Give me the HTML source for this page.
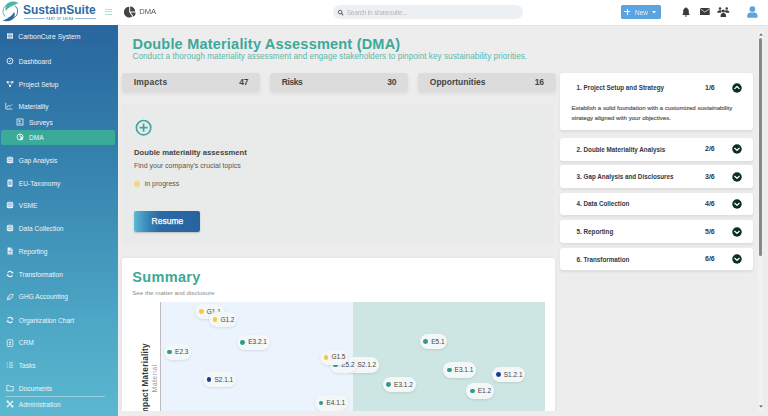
<!DOCTYPE html>
<html><head><meta charset="utf-8"><style>
html,body{margin:0;padding:0;width:768px;height:416px;overflow:hidden;background:#ededed;font-family:"Liberation Sans", sans-serif;}
.t{position:absolute;white-space:nowrap;line-height:1;}
.pill{position:absolute;height:15.2px;border-radius:7.6px;background:#f4f7f7;box-shadow:0 1px 2.5px rgba(0,0,0,0.10);display:flex;align-items:center;padding:0 2.8px 0 3.6px;white-space:nowrap;}
.dot{display:block;flex:none;width:4.8px;height:4.8px;border-radius:50%;margin-right:3px;}
.pl{font-size:6.5px;color:#444;line-height:1;position:relative;top:0.5px;}
</style></head><body>
<div style="position:absolute;left:0px;top:0px;width:768px;height:24.5px;background:#fff;z-index:5"></div>
<div style="position:absolute;left:117.5px;top:24.5px;width:650.5px;height:1.3px;background:#e3e5e5;z-index:5"></div>
<svg style="position:absolute;left:0;top:0;z-index:6" width="22" height="24" viewBox="0 0 22 24">
<path d="M10.3 3.9 A7.4 7.4 0 0 0 5.07 16.53" stroke="#4fb5a7" stroke-width="0.9" fill="none"/>
<path d="M10.3 18.7 A7.4 7.4 0 0 0 15.06 5.63" stroke="#2b6aa6" stroke-width="0.9" fill="none"/>
<path d="M18.8 3.2 C14.5 0.4 7.8 1.2 6 5.6 C5.2 7.6 5.3 9.5 5.9 11.2 C7.6 7.8 10.8 7.2 13.2 5.6 C15 4.6 16.8 3.5 18.8 3.2 Z" fill="#4fb5a7"/>
<path d="M2.6 20.6 C7 22 12.6 21.2 14.2 17 C15 15 14.8 13.3 14 12 C12.6 15.4 9.6 17 7.2 18.4 C5.6 19.3 4 19.9 2.6 20.6 Z" fill="#2b6aa6"/>
</svg>
<div class="t" style="left:23.4px;top:3.00px;font-size:13.7px;font-weight:bold;color:#2d6aa6;z-index:6;transform:scaleX(0.875);transform-origin:0 0">SustainSuite</div>
<div style="position:absolute;left:23.5px;top:18.2px;width:21.5px;height:0.7px;background:#9db8d4;z-index:6"></div>
<div style="position:absolute;left:74.7px;top:18.2px;width:21.1px;height:0.7px;background:#9db8d4;z-index:6"></div>
<div class="t" style="left:-40.2px;width:200px;text-align:center;top:19.00px;font-size:2.7px;color:#3fa99b;font-weight:bold;z-index:6;letter-spacing:0.5px;will-change:transform">PART OF SHIRA</div>
<div style="position:absolute;left:105.4px;top:8.8px;width:6.8px;height:0.75px;background:#b3ddd6;z-index:6"></div>
<div style="position:absolute;left:105.4px;top:11.3px;width:6.8px;height:0.75px;background:#b3ddd6;z-index:6"></div>
<div style="position:absolute;left:105.4px;top:14.0px;width:6.8px;height:0.75px;background:#b3ddd6;z-index:6"></div>
<svg style="position:absolute;left:120px;top:2.5px;z-index:6" width="20" height="18" viewBox="0 0 20 18">
<path d="M9.2 9.1 L9.2 3.7 A5.4 5.4 0 1 0 12.3 13.52 Z" fill="#454545"/>
<path d="M10.2 8.6 L10.2 3.6 A5.0 5.0 0 0 1 15.2 8.6 Z" fill="#454545"/>
<path d="M10.7 9.6 L15.7 9.6 A5.0 5.0 0 0 1 13.64 13.65 Z" fill="#454545"/>
</svg>
<div class="t" style="left:139.3px;top:8.00px;font-size:7.6px;color:#555;z-index:6">DMA</div>
<div style="position:absolute;left:332.8px;top:4.6px;width:190.2px;height:14.3px;background:#edf0f3;border-radius:7.2px;z-index:6"></div>
<svg style="position:absolute;left:336px;top:8px;z-index:7" width="8" height="8" viewBox="0 0 8 8">
<circle cx="4.1" cy="4.1" r="1.85" stroke="#5a5a5a" stroke-width="0.95" fill="none"/><path d="M5.4 5.4 L6.9 6.9" stroke="#5a5a5a" stroke-width="1.1" stroke-linecap="round"/></svg>
<div class="t" style="left:346.7px;top:10.00px;font-size:6.6px;color:#b4b4b4;z-index:7;letter-spacing:-0.22px">Search in sharesuite...</div>
<div style="position:absolute;left:620.7px;top:4.7px;width:40.3px;height:14.3px;background:#5ca4e0;border-radius:1.6px;z-index:6"></div>
<div style="position:absolute;left:624.3px;top:11.4px;width:5.8px;height:0.8px;background:#fff;z-index:7"></div>
<div style="position:absolute;left:626.8px;top:8.9px;width:0.8px;height:5.8px;background:#fff;z-index:7"></div>
<div class="t" style="left:635.0px;top:10.00px;font-size:6.5px;color:rgba(255,255,255,0.85);z-index:7">New</div>
<svg style="position:absolute;left:652px;top:10.5px;z-index:7" width="4" height="3" viewBox="0 0 4 3"><path d="M0 0 L4 0 L2 2.4 Z" fill="#fff"/></svg>
<svg style="position:absolute;left:681.5px;top:7px;z-index:7" width="8" height="10" viewBox="0 0 8 10">
<path d="M4 0.3 C4.5 0.3 4.7 0.7 4.7 1.1 C6.2 1.5 6.8 2.8 6.8 4.3 L6.8 6.3 L7.8 7.9 L0.2 7.9 L1.2 6.3 L1.2 4.3 C1.2 2.8 1.8 1.5 3.3 1.1 C3.3 0.7 3.5 0.3 4 0.3 Z" fill="#3a3a3a"/>
<path d="M2.8 8.5 L5.2 8.5 C5.2 9.2 4.7 9.7 4 9.7 C3.3 9.7 2.8 9.2 2.8 8.5 Z" fill="#3a3a3a"/></svg>
<svg style="position:absolute;left:699.7px;top:8.1px;z-index:7" width="10" height="7.4" viewBox="0 0 10 7.4">
<rect x="0" y="0" width="9.7" height="7.3" rx="0.8" fill="#3a3a3a"/>
<path d="M0.4 0.9 L4.85 4.1 L9.3 0.9" stroke="#fff" stroke-width="0.7" fill="none"/></svg>
<svg style="position:absolute;left:717.3px;top:6.6px;z-index:7" width="13" height="10.5" viewBox="0 0 13 10.5">
<circle cx="3.0" cy="1.5" r="1.25" fill="#3a3a3a"/><circle cx="9.7" cy="1.5" r="1.25" fill="#3a3a3a"/>
<path d="M0.2 5.7 C0.2 4.3 1.2 3.3 2.6 3.3 L3.4 3.3 C4.2 3.3 4.7 3.6 5 4 C4.3 4.5 4 5 3.9 5.7 Z" fill="#3a3a3a"/>
<path d="M12.4 5.7 C12.4 4.3 11.4 3.3 10 3.3 L9.2 3.3 C8.4 3.3 7.9 3.6 7.6 4 C8.3 4.5 8.6 5 8.7 5.7 Z" fill="#3a3a3a"/>
<circle cx="6.3" cy="3.9" r="1.5" fill="#3a3a3a"/>
<path d="M3.5 9.4 C3.5 7.4 4.4 6.1 5.8 6.1 L6.8 6.1 C8.2 6.1 9.1 7.4 9.1 9.4 C9.1 9.8 8.9 10.1 8.5 10.1 L4.1 10.1 C3.7 10.1 3.5 9.8 3.5 9.4 Z" fill="#3a3a3a"/></svg>
<svg style="position:absolute;left:746.8px;top:5.8px;z-index:7" width="11" height="12" viewBox="0 0 11 12">
<circle cx="5.4" cy="3.1" r="2.9" fill="#5ca4e0"/>
<path d="M0.1 10.6 C0.1 7.8 1.6 6.4 3.4 6.4 L7.4 6.4 C9.2 6.4 10.7 7.8 10.7 10.6 C10.7 11.3 10.3 11.7 9.6 11.7 L1.2 11.7 C0.5 11.7 0.1 11.3 0.1 10.6 Z" fill="#5ca4e0"/></svg>
<div style="position:absolute;left:0px;top:24.5px;width:117.5px;height:391.5px;background:linear-gradient(180deg,#28669e 0%,#3582ae 35%,#4ca6c5 75%,#5bb8d0 100%);z-index:4"></div>
<div style="position:absolute;left:1.2px;top:130px;width:113.8px;height:14.7px;background:#3aab99;border-radius:2px;z-index:5"></div>
<div class="t" style="left:18.2px;top:34.00px;font-size:6.9px;color:#eef4fa;z-index:6">CarbonCure System</div>
<svg style="position:absolute;left:5.5px;top:32.1px;z-index:6" width="8" height="8" viewBox="0 0 8 8"><rect x="1" y="1.3" width="6" height="5.4" rx="0.6" fill="#eef4fa"/><path d="M3 1.3 V6.7 M5 1.3 V6.7 M1 4 H7" stroke="#2a68a2" stroke-width="0.55"/></svg>
<div class="t" style="left:18.8px;top:59.00px;font-size:6.6px;color:#eef4fa;z-index:6">Dashboard</div>
<svg style="position:absolute;left:5.5px;top:56.9px;z-index:6" width="8" height="8" viewBox="0 0 8 8"><circle cx="4" cy="4" r="2.9" stroke="#eef4fa" stroke-width="0.9" fill="none"/><path d="M3.2 5 L5.2 2.7" stroke="#eef4fa" stroke-width="0.9"/></svg>
<div class="t" style="left:18.8px;top:82.00px;font-size:6.6px;color:#eef4fa;z-index:6">Project Setup</div>
<svg style="position:absolute;left:5.5px;top:79.80000000000001px;z-index:6" width="8" height="8" viewBox="0 0 8 8"><rect x="0.7" y="1.2" width="2" height="1.8" fill="#eef4fa"/><rect x="5.3" y="1.2" width="2" height="1.8" fill="#eef4fa"/><rect x="3" y="5" width="2" height="1.8" fill="#eef4fa"/><path d="M2.7 2.1 H5.3 M1.7 3 L3.5 5 M6.3 3 L4.5 5" stroke="#eef4fa" stroke-width="0.6"/></svg>
<div class="t" style="left:18.6px;top:104.00px;font-size:6.6px;color:#eef4fa;z-index:6">Materiality</div>
<svg style="position:absolute;left:5.300000000000001px;top:102.30000000000001px;z-index:6" width="8" height="8" viewBox="0 0 8 8"><path d="M0.8 0.8 V7 H7.4" stroke="#eef4fa" stroke-width="0.8" fill="none"/><path d="M1.8 5.4 L3.4 3.4 L4.8 4.6 L7 2.4" stroke="#eef4fa" stroke-width="0.8" fill="none"/></svg>
<div class="t" style="left:28.9px;top:120.00px;font-size:6.6px;color:#eef4fa;z-index:6">Surveys</div>
<svg style="position:absolute;left:15.899999999999999px;top:118.0px;z-index:6" width="8" height="8" viewBox="0 0 8 8"><rect x="1" y="1" width="6" height="6" stroke="#eef4fa" stroke-width="0.8" fill="none"/><rect x="2.5" y="2.4" width="2" height="1.5" fill="#eef4fa"/><path d="M2.4 5.3 H5.6" stroke="#eef4fa" stroke-width="0.7"/></svg>
<div class="t" style="left:28.9px;top:135.00px;font-size:6.6px;color:#eef4fa;z-index:6">DMA</div>
<svg style="position:absolute;left:15.899999999999999px;top:133.3px;z-index:6" width="8" height="8" viewBox="0 0 8 8"><circle cx="4" cy="4" r="3" stroke="#eef4fa" stroke-width="0.9" fill="none"/><path d="M4 1 V4 H7" stroke="#eef4fa" stroke-width="0.8" fill="none"/><circle cx="5.6" cy="5.6" r="1.6" fill="#eef4fa"/></svg>
<div class="t" style="left:18.8px;top:158.00px;font-size:6.6px;color:#eef4fa;z-index:6">Gap Analysis</div>
<svg style="position:absolute;left:5.5px;top:156.1px;z-index:6" width="8" height="8" viewBox="0 0 8 8"><path d="M0.8 1.9 C0.8 0.4 7.2 0.4 7.2 1.9 V6.2 C7.2 7.7 0.8 7.7 0.8 6.2 Z" fill="#eef4fa"/><path d="M1.3 3.0 C2.2 3.9 5.8 3.9 6.7 3.0 M1.3 4.7 C2.2 5.6 5.8 5.6 6.7 4.7" stroke="#3a88b8" stroke-width="0.55" fill="none"/><ellipse cx="4" cy="1.9" rx="2.4" ry="0.7" fill="#3a88b8" opacity="0.5"/></svg>
<div class="t" style="left:18.8px;top:181.00px;font-size:6.6px;color:#eef4fa;z-index:6">EU-Taxonomy</div>
<svg style="position:absolute;left:5.6px;top:178.8px;z-index:6" width="8" height="8" viewBox="0 0 8 8"><rect x="1.5" y="0.4" width="5" height="7.3" rx="1" fill="#eef4fa"/><path d="M2.4 2.3 H5.6 M2.4 5.6 H5.6" stroke="#3a88b8" stroke-width="0.6"/><rect x="2.3" y="3.1" width="3.4" height="1.8" fill="#3a88b8" opacity="0.6"/></svg>
<div class="t" style="left:18.8px;top:203.00px;font-size:6.6px;color:#eef4fa;z-index:6">VSME</div>
<svg style="position:absolute;left:5.5px;top:201.3px;z-index:6" width="8" height="8" viewBox="0 0 8 8"><path d="M0.8 1.9 C0.8 0.4 7.2 0.4 7.2 1.9 V6.2 C7.2 7.7 0.8 7.7 0.8 6.2 Z" fill="#eef4fa"/><path d="M1.3 3.0 C2.2 3.9 5.8 3.9 6.7 3.0 M1.3 4.7 C2.2 5.6 5.8 5.6 6.7 4.7" stroke="#3a88b8" stroke-width="0.55" fill="none"/><ellipse cx="4" cy="1.9" rx="2.4" ry="0.7" fill="#3a88b8" opacity="0.5"/></svg>
<div class="t" style="left:18.8px;top:226.00px;font-size:6.6px;color:#eef4fa;z-index:6">Data Collection</div>
<svg style="position:absolute;left:5.5px;top:224.4px;z-index:6" width="8" height="8" viewBox="0 0 8 8"><path d="M0.8 1.9 C0.8 0.4 7.2 0.4 7.2 1.9 V6.2 C7.2 7.7 0.8 7.7 0.8 6.2 Z" fill="#eef4fa"/><path d="M1.3 3.0 C2.2 3.9 5.8 3.9 6.7 3.0 M1.3 4.7 C2.2 5.6 5.8 5.6 6.7 4.7" stroke="#3a88b8" stroke-width="0.55" fill="none"/><ellipse cx="4" cy="1.9" rx="2.4" ry="0.7" fill="#3a88b8" opacity="0.5"/></svg>
<div class="t" style="left:18.8px;top:249.00px;font-size:6.6px;color:#eef4fa;z-index:6">Reporting</div>
<svg style="position:absolute;left:5.5px;top:247.4px;z-index:6" width="8" height="8" viewBox="0 0 8 8"><path d="M1.6 0.5 H4.9 L6.6 2.2 V7.5 H1.6 Z" fill="#eef4fa"/><path d="M4.8 0.5 V2.3 H6.6" stroke="#4a9cc4" stroke-width="0.5" fill="none"/><rect x="2.6" y="3.6" width="2.9" height="1.6" fill="#4a9cc4" opacity="0.75"/><path d="M2.6 6.3 H5.5" stroke="#4a9cc4" stroke-width="0.5"/></svg>
<div class="t" style="left:18.8px;top:272.00px;font-size:6.6px;color:#eef4fa;z-index:6">Transformation</div>
<svg style="position:absolute;left:5.5px;top:270.2px;z-index:6" width="8" height="8" viewBox="0 0 8 8"><path d="M6.6 3.2 A2.8 2.8 0 0 0 1.6 2.6" stroke="#eef4fa" stroke-width="1.15" fill="none"/><path d="M1.4 4.8 A2.8 2.8 0 0 0 6.4 5.4" stroke="#eef4fa" stroke-width="1.15" fill="none"/><path d="M5.2 3.4 H7.2 V1.4 Z M2.8 4.6 H0.8 V6.6 Z" fill="#eef4fa"/></svg>
<div class="t" style="left:18.8px;top:294.00px;font-size:6.6px;color:#eef4fa;z-index:6">GHG Accounting</div>
<svg style="position:absolute;left:5.5px;top:292.59999999999997px;z-index:6" width="8" height="8" viewBox="0 0 8 8"><path d="M1.5 6.5 C1.5 3 3.5 1.2 7 1.2 C7 4.8 5 6.5 1.5 6.5 Z" stroke="#eef4fa" stroke-width="0.8" fill="none"/><path d="M0.8 7.3 L4.8 3.3" stroke="#eef4fa" stroke-width="0.7"/></svg>
<div class="t" style="left:18.8px;top:318.00px;font-size:6.6px;color:#eef4fa;z-index:6">Organization Chart</div>
<svg style="position:absolute;left:5.5px;top:315.7px;z-index:6" width="8" height="8" viewBox="0 0 8 8"><path d="M6.6 3.2 A2.8 2.8 0 0 0 1.6 2.6" stroke="#eef4fa" stroke-width="1.15" fill="none"/><path d="M1.4 4.8 A2.8 2.8 0 0 0 6.4 5.4" stroke="#eef4fa" stroke-width="1.15" fill="none"/><path d="M5.2 3.4 H7.2 V1.4 Z M2.8 4.6 H0.8 V6.6 Z" fill="#eef4fa"/></svg>
<div class="t" style="left:18.8px;top:340.00px;font-size:6.6px;color:#eef4fa;z-index:6">CRM</div>
<svg style="position:absolute;left:5.5px;top:338.5px;z-index:6" width="8" height="8" viewBox="0 0 8 8"><rect x="1.2" y="0.8" width="5.6" height="6.6" rx="0.7" stroke="#eef4fa" stroke-width="0.8" fill="none"/><circle cx="4" cy="3.4" r="1" fill="#eef4fa"/><path d="M2.6 6 C2.6 4.9 5.4 4.9 5.4 6 Z" fill="#eef4fa"/></svg>
<div class="t" style="left:18.8px;top:363.00px;font-size:6.6px;color:#eef4fa;z-index:6">Tasks</div>
<svg style="position:absolute;left:5.5px;top:361.09999999999997px;z-index:6" width="8" height="8" viewBox="0 0 8 8"><path d="M0.8 1.8 H1.8 M0.8 4 H1.8 M0.8 6.2 H1.8 M3 1.8 H7.2 M3 4 H7.2 M3 6.2 H7.2" stroke="#eef4fa" stroke-width="0.8"/></svg>
<div class="t" style="left:18.8px;top:386.00px;font-size:6.6px;color:#eef4fa;z-index:6">Documents</div>
<svg style="position:absolute;left:5.5px;top:384.4px;z-index:6" width="8" height="8" viewBox="0 0 8 8"><path d="M0.8 1.5 H3 L3.8 2.4 H7.2 V6.8 H0.8 Z" stroke="#eef4fa" stroke-width="0.8" fill="none" stroke-linejoin="round"/></svg>
<div class="t" style="left:18.8px;top:402.00px;font-size:6.6px;color:#eef4fa;z-index:6">Administration</div>
<svg style="position:absolute;left:5.5px;top:399.9px;z-index:6" width="8" height="8" viewBox="0 0 8 8"><path d="M1 1 L7 7 M7 1 L1 7" stroke="#eef4fa" stroke-width="1.1"/><circle cx="1.6" cy="1.6" r="1.1" fill="#eef4fa"/><circle cx="6.4" cy="6.4" r="1.1" fill="#eef4fa"/></svg>
<div style="position:absolute;left:5.6px;top:396.1px;width:99.4px;height:0.7px;background:rgba(255,255,255,0.38);z-index:6"></div>
<div class="t" style="left:132.5px;top:37.00px;font-size:14.5px;font-weight:bold;color:#3ba99b;letter-spacing:0.21px">Double Materiality Assessment (DMA)</div>
<div class="t" style="left:132.5px;top:53.00px;font-size:8.2px;color:#5cb8ab;letter-spacing:0.03px">Conduct a thorough materiality assessment and engage stakeholders to pinpoint key sustainability priorities.</div>
<div style="position:absolute;left:122px;top:72.7px;width:138px;height:18.9px;background:#dcdcdc;border-radius:3px;box-shadow:0 2px 4px rgba(0,0,0,0.07)"></div>
<div class="t" style="left:133.8px;top:78.00px;font-size:8.5px;font-weight:bold;color:#444;letter-spacing:0.2px">Impacts</div>
<div class="t" style="right:519.4px;top:78.00px;font-size:8.5px;font-weight:bold;color:#444">47</div>
<div style="position:absolute;left:270px;top:72.7px;width:138px;height:18.9px;background:#dcdcdc;border-radius:3px;box-shadow:0 2px 4px rgba(0,0,0,0.07)"></div>
<div class="t" style="left:281.8px;top:78.00px;font-size:8.5px;font-weight:bold;color:#444;letter-spacing:-0.45px">Risks</div>
<div class="t" style="right:371.4px;top:78.00px;font-size:8.5px;font-weight:bold;color:#444">30</div>
<div style="position:absolute;left:418px;top:72.7px;width:137.5px;height:18.9px;background:#dcdcdc;border-radius:3px;box-shadow:0 2px 4px rgba(0,0,0,0.07)"></div>
<div class="t" style="left:429.8px;top:78.00px;font-size:8.5px;font-weight:bold;color:#444;letter-spacing:0.0px">Opportunities</div>
<div class="t" style="right:223.89999999999998px;top:78.00px;font-size:8.5px;font-weight:bold;color:#444">16</div>
<div style="position:absolute;left:121.8px;top:104.5px;width:431.5px;height:138.8px;background:#e9ebea;border-radius:3px;box-shadow:0 0 3px rgba(0,0,0,0.03)"></div>
<svg style="position:absolute;left:134px;top:117.6px" width="19.2" height="19.2" viewBox="0 0 19.2 19.2"><circle cx="9.6" cy="9.7" r="7.2" stroke="#3aa99b" stroke-width="1.65" fill="none"/><path d="M9.6 5.6 V13.8 M5.5 9.7 H13.7" stroke="#3aa99b" stroke-width="1.7"/></svg>
<div class="t" style="left:134px;top:149.00px;font-size:7.7px;font-weight:bold;color:#444">Double materiality assessment</div>
<div class="t" style="left:134px;top:162.00px;font-size:7.0px;color:#555">Find your company&#39;s crucial topics</div>
<div style="position:absolute;left:133.8px;top:180.7px;width:6px;height:6px;background:#f8d67e;border-radius:50%"></div>
<div class="t" style="left:144.7px;top:180.00px;font-size:7.0px;color:#555">in progress</div>
<div style="position:absolute;left:134.1px;top:211px;width:66.4px;height:20.7px;background:linear-gradient(90deg,#5dbad3 0%,#4a9fc8 10%,#3580b4 24%,#2a6aa5 40%,#2664a0 100%);border-radius:2px;box-shadow:0 1px 2px rgba(0,0,0,0.2)"></div>
<div class="t" style="left:67.4px;width:200px;text-align:center;top:217.00px;font-size:8.5px;color:#fff;-webkit-text-stroke:0.25px #fff">Resume</div>
<div style="position:absolute;left:121.7px;top:258px;width:433.6px;height:160px;background:#fff;border-radius:3px;box-shadow:0 0 4px rgba(0,0,0,0.06)"></div>
<div class="t" style="left:132.2px;top:270.00px;font-size:14.5px;font-weight:bold;color:#3ba99b;letter-spacing:0.35px">Summary</div>
<div class="t" style="left:132.2px;top:290.00px;font-size:6.2px;color:#8a8a8a">See the matter and disclosure</div>
<div style="position:absolute;left:160.5px;top:302px;width:192.5px;height:120px;background:#ebf4fd"></div>
<div style="position:absolute;left:353px;top:302px;width:192.3px;height:120px;background:#cde6e3"></div>
<div style="position:absolute;left:160px;top:302px;width:1px;height:120px;background:#bdbdbd"></div>
<div class="t" style="left:45.75999999999999px;top:375.79999999999995px;width:200px;height:8.2px;line-height:8.2px;text-align:center;font-size:8.2px;transform:rotate(-90deg);font-weight:bold;color:#333;letter-spacing:0.27px">Impact Materiality</div>
<div class="t" style="left:54.099999999999994px;top:374.8px;width:200px;height:7.0px;line-height:7.0px;text-align:center;font-size:7.0px;transform:rotate(-90deg);color:#999;letter-spacing:0.4px">Material</div>
<div class="pill" style="left:195.40px;top:303.80px"><span class="dot" style="background:#f5c842"></span><span class="pl">G1.1</span></div>
<div class="pill" style="left:209.00px;top:311.90px"><span class="dot" style="background:#f5c842"></span><span class="pl">G1.2</span></div>
<div class="pill" style="left:236.80px;top:334.60px"><span class="dot" style="background:#2e9a8a"></span><span class="pl">E3.2.1</span></div>
<div class="pill" style="left:163.70px;top:344.40px"><span class="dot" style="background:#2e9a8a"></span><span class="pl">E2.3</span></div>
<div class="pill" style="left:346.00px;top:357.40px"><span class="dot" style="background:#2e9a8a"></span><span class="pl">S2.1.2</span></div>
<div class="pill" style="left:329.80px;top:357.40px"><span class="dot" style="background:#2e9a8a"></span><span class="pl">E5.2</span></div>
<div class="pill" style="left:320.00px;top:349.60px"><span class="dot" style="background:#f5c842"></span><span class="pl">G1.5</span></div>
<div class="pill" style="left:203.00px;top:372.00px"><span class="dot" style="background:#1b3b8c"></span><span class="pl">S2.1.1</span></div>
<div class="pill" style="left:315.00px;top:395.40px"><span class="dot" style="background:#2e9a8a"></span><span class="pl">E4.1.1</span></div>
<div class="pill" style="left:419.80px;top:334.00px"><span class="dot" style="background:#2e9a8a"></span><span class="pl">E5.1</span></div>
<div class="pill" style="left:443.20px;top:362.40px"><span class="dot" style="background:#2e9a8a"></span><span class="pl">E3.1.1</span></div>
<div class="pill" style="left:492.40px;top:366.90px"><span class="dot" style="background:#1b3b8c"></span><span class="pl">S1.2.1</span></div>
<div class="pill" style="left:382.70px;top:376.90px"><span class="dot" style="background:#2e9a8a"></span><span class="pl">E3.1.2</span></div>
<div class="pill" style="left:466.40px;top:383.40px"><span class="dot" style="background:#2e9a8a"></span><span class="pl">E1.2</span></div>
<div style="position:absolute;left:117.5px;top:411px;width:650.5px;height:5px;background:#ededed;z-index:3"></div>
<div style="position:absolute;left:560.1px;top:72.6px;width:192.6px;height:57.20000000000002px;background:#fff;border-radius:3px;box-shadow:0 1.5px 3px rgba(0,0,0,0.07)"></div>
<div class="t" style="left:576.5px;top:85.00px;font-size:6.3px;font-weight:bold;color:#2e3848">1. Project Setup and Strategy</div>
<div class="t" style="left:705.0px;top:84.00px;font-size:7.0px;font-weight:bold;color:#2e3848">1/6</div>
<svg style="position:absolute;left:731.8px;top:83.0px" width="10" height="10" viewBox="-5 -5 10 10"><circle cx="0" cy="0" r="4.75" fill="#0d2e28"/><path d="M-2.2 0.6 L0 -1.5 L2.2 0.6" stroke="#fff" stroke-width="1.25" fill="none" stroke-linecap="round" stroke-linejoin="round"/></svg>
<div style="position:absolute;left:560.1px;top:138.0px;width:192.6px;height:22.80000000000001px;background:#fff;border-radius:3px;box-shadow:0 1.5px 3px rgba(0,0,0,0.07)"></div>
<div class="t" style="left:576.5px;top:147.00px;font-size:6.3px;font-weight:bold;color:#2e3848">2. Double Materiality Analysis</div>
<div class="t" style="left:705.0px;top:145.00px;font-size:7.0px;font-weight:bold;color:#2e3848">2/6</div>
<svg style="position:absolute;left:731.8px;top:144.4px" width="10" height="10" viewBox="-5 -5 10 10"><circle cx="0" cy="0" r="4.75" fill="#0d2e28"/><path d="M-2.2 -0.7 L0 1.4 L2.2 -0.7" stroke="#fff" stroke-width="1.25" fill="none" stroke-linecap="round" stroke-linejoin="round"/></svg>
<div style="position:absolute;left:560.1px;top:165.2px;width:192.6px;height:22.80000000000001px;background:#fff;border-radius:3px;box-shadow:0 1.5px 3px rgba(0,0,0,0.07)"></div>
<div class="t" style="left:576.5px;top:174.00px;font-size:6.3px;font-weight:bold;color:#2e3848">3. Gap Analysis and Disclosures</div>
<div class="t" style="left:705.0px;top:173.00px;font-size:7.0px;font-weight:bold;color:#2e3848">3/6</div>
<svg style="position:absolute;left:731.8px;top:171.6px" width="10" height="10" viewBox="-5 -5 10 10"><circle cx="0" cy="0" r="4.75" fill="#0d2e28"/><path d="M-2.2 -0.7 L0 1.4 L2.2 -0.7" stroke="#fff" stroke-width="1.25" fill="none" stroke-linecap="round" stroke-linejoin="round"/></svg>
<div style="position:absolute;left:560.1px;top:192.6px;width:192.6px;height:22.80000000000001px;background:#fff;border-radius:3px;box-shadow:0 1.5px 3px rgba(0,0,0,0.07)"></div>
<div class="t" style="left:576.5px;top:201.00px;font-size:6.3px;font-weight:bold;color:#2e3848">4. Data Collection</div>
<div class="t" style="left:705.0px;top:200.00px;font-size:7.0px;font-weight:bold;color:#2e3848">4/6</div>
<svg style="position:absolute;left:731.8px;top:199.0px" width="10" height="10" viewBox="-5 -5 10 10"><circle cx="0" cy="0" r="4.75" fill="#0d2e28"/><path d="M-2.2 -0.7 L0 1.4 L2.2 -0.7" stroke="#fff" stroke-width="1.25" fill="none" stroke-linecap="round" stroke-linejoin="round"/></svg>
<div style="position:absolute;left:560.1px;top:220.3px;width:192.6px;height:22.69999999999999px;background:#fff;border-radius:3px;box-shadow:0 1.5px 3px rgba(0,0,0,0.07)"></div>
<div class="t" style="left:576.5px;top:229.00px;font-size:6.3px;font-weight:bold;color:#2e3848">5. Reporting</div>
<div class="t" style="left:705.0px;top:228.00px;font-size:7.0px;font-weight:bold;color:#2e3848">5/6</div>
<svg style="position:absolute;left:731.8px;top:226.65px" width="10" height="10" viewBox="-5 -5 10 10"><circle cx="0" cy="0" r="4.75" fill="#0d2e28"/><path d="M-2.2 -0.7 L0 1.4 L2.2 -0.7" stroke="#fff" stroke-width="1.25" fill="none" stroke-linecap="round" stroke-linejoin="round"/></svg>
<div style="position:absolute;left:560.1px;top:248.0px;width:192.6px;height:22.399999999999977px;background:#fff;border-radius:3px;box-shadow:0 1.5px 3px rgba(0,0,0,0.07)"></div>
<div class="t" style="left:576.5px;top:257.00px;font-size:6.3px;font-weight:bold;color:#2e3848">6. Transformation</div>
<div class="t" style="left:705.0px;top:255.00px;font-size:7.0px;font-weight:bold;color:#2e3848">6/6</div>
<svg style="position:absolute;left:731.8px;top:254.2px" width="10" height="10" viewBox="-5 -5 10 10"><circle cx="0" cy="0" r="4.75" fill="#0d2e28"/><path d="M-2.2 -0.7 L0 1.4 L2.2 -0.7" stroke="#fff" stroke-width="1.25" fill="none" stroke-linecap="round" stroke-linejoin="round"/></svg>
<div class="t" style="left:571.4px;top:105.00px;font-size:6.1px;color:#5e5e5e;-webkit-text-stroke:0.2px #5e5e5e">Establish a solid foundation with a customized sustainability</div>
<div class="t" style="left:571.4px;top:115.00px;font-size:6.1px;color:#5e5e5e;-webkit-text-stroke:0.2px #5e5e5e">strategy aligned with your objectives.</div>
<div style="position:absolute;left:758px;top:30px;width:5.2px;height:381px;background:#f1f1f1"></div>
<svg style="position:absolute;left:758.5px;top:32.6px" width="4" height="3" viewBox="0 0 4 3"><path d="M0.2 2.6 L3.8 2.6 L2 0.4 Z" fill="#555"/></svg>
<svg style="position:absolute;left:758.5px;top:405.2px" width="4" height="3" viewBox="0 0 4 3"><path d="M0.2 0.4 L3.8 0.4 L2 2.6 Z" fill="#555"/></svg>
<div style="position:absolute;left:759px;top:38px;width:3.2px;height:218px;background:#888;border-radius:1.6px"></div>
</body></html>
